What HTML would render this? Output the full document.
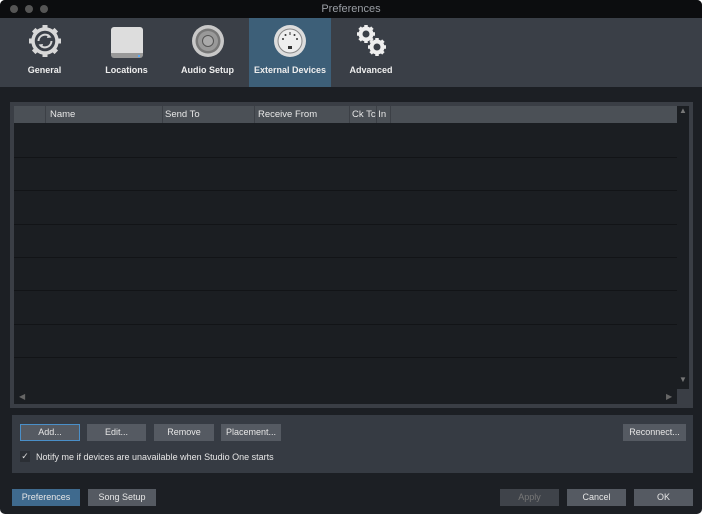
<!DOCTYPE html><html><head><style>
body{margin:0;width:702px;height:514px;background:#fff;font-family:"Liberation Sans",sans-serif;overflow:hidden}
.win{position:absolute;left:0;top:0;width:702px;height:514px;background:#1c1f24;border-radius:5px;overflow:hidden}
.title{position:absolute;left:0;top:0;width:702px;height:18px;background:#0c0d0f;color:#9a9ea4;font-size:11px;text-align:center;line-height:18px}
.dot{position:absolute;top:5px;width:8px;height:8px;border-radius:50%;background:#555}
.tb{position:absolute;left:0;top:18px;width:702px;height:69px;background:#3a3f47}
.tab{position:absolute;top:0;height:69px;color:#eee;font-size:9px;font-weight:bold;text-align:center}
.tab span{position:absolute;left:0;right:0;top:47px}
.tab svg{position:absolute;left:50%;top:4px;transform:translateX(-50%)}
.frame{position:absolute;left:10px;top:102px;width:683px;height:306px;background:#3a3e45}
.inner{position:absolute;left:4px;top:4px;width:663px;height:298px;background:#1b1e22}
.hdr{position:absolute;left:0;top:0;width:663px;height:17px;background:#4b5056;color:#e8e8e8;font-size:9.5px}
.hdr b{position:absolute;top:3px;font-weight:normal}
.hdr i{position:absolute;top:0;width:1px;height:17px;background:#3c4046}
.row{position:absolute;left:0;width:663px;height:1px;background:#121417}
.vs{position:absolute;left:667px;top:4px;width:12px;height:283px;background:#1b1e22}
.panel{position:absolute;left:12px;top:415px;width:681px;height:58px;background:#363b43}
.btn{position:absolute;height:17px;background:#555a62;color:#e6e6e6;font-size:9px;text-align:center;line-height:17px}
</style></head><body><div class="win">
<div class="title">Preferences</div>
<div class="dot" style="left:10px"></div><div class="dot" style="left:25px"></div><div class="dot" style="left:40px"></div>
<div class="tb">
<div class="tab" style="left:12px;width:65px"><svg width="38" height="38" viewBox="0 0 38 38"><g stroke="#d8d8d8" fill="none"><circle cx="19" cy="19" r="12" stroke-width="3.5"/><g stroke-width="5"><path d="M19 3v5M19 30v5M3 19h5M30 19h5M7.7 7.7l3.5 3.5M26.8 26.8l3.5 3.5M7.7 30.3l3.5-3.5M26.8 11.2l3.5-3.5"/></g><path d="M12.5 19a6.5 6.5 0 0 1 11.5-4M25.5 19a6.5 6.5 0 0 1-11.5 4" stroke-width="2"/></g><path d="M22 12l3.5 3.5-4.5 0.5zM16 26l-3.5-3.5 4.5-0.5z" fill="#d8d8d8"/></svg><span>General</span></div>
<div class="tab" style="left:94px;width:65px"><div style="position:absolute;left:17px;top:9px;width:32px;height:26px;background:#ddd;border-radius:3px;border-bottom:5px solid #999"></div><div style="position:absolute;left:44px;top:37px;width:2px;height:2px;background:#5af"></div><span>Locations</span></div>
<div class="tab" style="left:175px;width:65px"><svg width="38" height="38" viewBox="0 0 38 38"><circle cx="19" cy="19" r="16" fill="#c8c8c8"/><circle cx="19" cy="19" r="12.5" fill="#777"/><circle cx="19" cy="19" r="10" fill="#999"/><circle cx="19" cy="19" r="5.5" fill="#aaa" stroke="#555"/></svg><span>Audio Setup</span></div>
<div class="tab" style="left:249px;width:82px;background:#3d5f78"><svg width="38" height="38" viewBox="0 0 38 38"><circle cx="19" cy="19" r="16" fill="#ddd"/><circle cx="19" cy="19" r="12" fill="#eee" stroke="#888"/><rect x="17" y="24" width="4" height="3" fill="#333"/><circle cx="12" cy="17" r="1" fill="#333"/><circle cx="26" cy="17" r="1" fill="#333"/><circle cx="14.5" cy="13" r="1" fill="#333"/><circle cx="23.5" cy="13" r="1" fill="#333"/><rect x="18.5" y="10" width="1" height="3" fill="#333"/></svg><span>External Devices</span></div>
<div class="tab" style="left:340px;width:62px"><svg width="40" height="40" viewBox="0 0 40 40"><g stroke="#eee" fill="none"><circle cx="15" cy="12" r="5.5" stroke-width="4"/><circle cx="26" cy="25" r="5.5" stroke-width="4"/><g stroke-width="3.5"><path d="M15 3v3M15 18v3M6 12h3M21 12h3M8.6 5.6l2 2M19.4 16.4l2 2M8.6 18.4l2-2M19.4 7.6l2-2"/><path d="M26 16v3M26 31v3M17 25h3M32 25h3M19.6 18.6l2 2M30.4 29.4l2 2M19.6 31.4l2-2M30.4 20.6l2-2"/></g></g></svg><span>Advanced</span></div>
</div>
<div class="frame"><div class="inner">
<div class="hdr"><i style="left:31px"></i><b style="left:36px">Name</b><i style="left:148px"></i><b style="left:151px">Send To</b><i style="left:240px"></i><b style="left:244px">Receive From</b><i style="left:335px"></i><b style="left:338px">Ck Tc In</b><i style="left:362px"></i><i style="left:376px"></i></div>
<div class="row" style="top:51px"></div><div class="row" style="top:84px"></div><div class="row" style="top:118px"></div><div class="row" style="top:151px"></div><div class="row" style="top:184px"></div><div class="row" style="top:218px"></div><div class="row" style="top:251px"></div>
<div style="position:absolute;left:5px;top:286px;color:#666;font-size:8px">◀</div><div style="position:absolute;left:652px;top:286px;color:#666;font-size:8px">▶</div>
</div><div class="vs"><div style="color:#777;font-size:8px;text-align:center">▲</div><div style="color:#777;font-size:8px;text-align:center;margin-top:260px">▼</div></div></div>
<div class="panel">
<div class="btn" style="left:8px;top:9px;width:58px;border:1px solid #4a8fc8;height:15px;line-height:15px">Add...</div>
<div class="btn" style="left:75px;top:9px;width:59px">Edit...</div>
<div class="btn" style="left:142px;top:9px;width:60px">Remove</div>
<div class="btn" style="left:209px;top:9px;width:60px">Placement...</div>
<div class="btn" style="left:611px;top:9px;width:63px">Reconnect...</div>
<div style="position:absolute;left:8px;top:36px;width:10px;height:11px;background:#2b2f35;color:#ddd;font-size:9px;line-height:11px;text-align:center">✓</div>
<div style="position:absolute;left:24px;top:37px;color:#e6e6e6;font-size:9px">Notify me if devices are unavailable when Studio One starts</div>
</div>
<div class="btn" style="left:12px;top:489px;width:68px;background:#3f6a8e">Preferences</div>
<div class="btn" style="left:88px;top:489px;width:68px">Song Setup</div>
<div class="btn" style="left:500px;top:489px;width:59px;background:#3f434a;color:#777">Apply</div>
<div class="btn" style="left:567px;top:489px;width:59px">Cancel</div>
<div class="btn" style="left:634px;top:489px;width:59px">OK</div>
</div></body></html>
